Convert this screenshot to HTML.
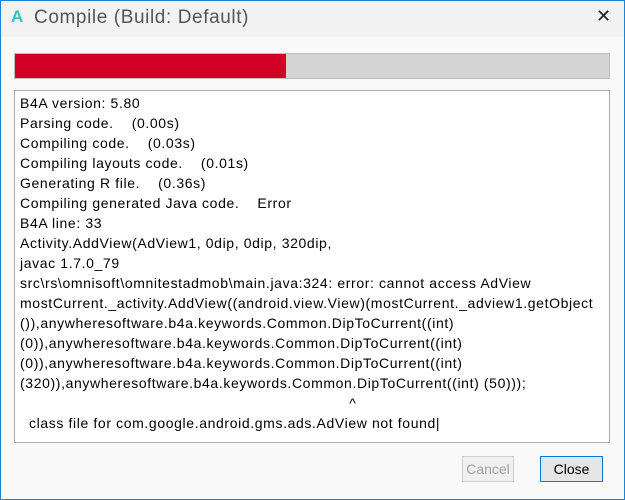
<!DOCTYPE html>
<html><head><style>
body{margin:0;width:625px;height:500px;overflow:hidden;background:#fff;font-family:"Liberation Sans",sans-serif}
.win{position:absolute;left:0;top:0;width:623px;height:498px;border:1px solid #1883d7;background:#f9f9f9}
.title{position:absolute;left:0;top:0;width:623px;height:36px;background:#f2f2f2}
.title .a{position:absolute;left:10px;top:6px;color:#2cc6c0;font-weight:bold;font-size:17px}
.title .t{position:absolute;left:33px;top:6px;color:#555;font-size:19px;letter-spacing:0.6px}
.title .x{position:absolute;left:595px;top:5px;font-size:18px;color:#222}
.pb{position:absolute;left:13px;top:52px;width:594px;height:24px;border:1px solid #bcbcbc;background:#d4d4d4}
.pb div{width:271px;height:24px;background:#d20027}
.box{position:absolute;left:13px;top:89px;width:594px;height:351px;border:1px solid #acacac;background:#fff}
.txt{position:absolute;left:5px;top:2px;font-size:14px;line-height:20px;color:#000;white-space:pre;letter-spacing:0.62px}
.btn{position:absolute;top:455px;height:24px;border:1px solid #adadad;background:#e5e5e5;font-size:14px;line-height:24px;text-align:center}
</style></head><body>
<div class="win">
<div class="title"><span class="a">A</span><span class="t">Compile (Build: Default)</span><span class="x">✕</span></div>
<div class="pb"><div></div></div>
<div class="box"><div class="txt">B4A version: 5.80
Parsing code.    (0.00s)
Compiling code.    (0.03s)
Compiling layouts code.    (0.01s)
Generating R file.    (0.36s)
Compiling generated Java code.    Error
B4A line: 33
Activity.AddView(AdView1, 0dip, 0dip, 320dip,
javac 1.7.0_79
src\rs\omnisoft\omnitestadmob\main.java:324: error: cannot access AdView
mostCurrent._activity.AddView((android.view.View)(mostCurrent._adview1.getObject
()),anywheresoftware.b4a.keywords.Common.DipToCurrent((int)
(0)),anywheresoftware.b4a.keywords.Common.DipToCurrent((int)
(0)),anywheresoftware.b4a.keywords.Common.DipToCurrent((int)
(320)),anywheresoftware.b4a.keywords.Common.DipToCurrent((int) (50)));
                                                                         ^
  class file for com.google.android.gms.ads.AdView not found|</div></div>
<div class="btn" style="left:461px;width:50px;color:#a0a0a0;background:#f0f0f0;border-color:#cfcfcf">Cancel</div>
<div class="btn" style="left:539px;width:61px;border-color:#0078d7">Close</div>
</div>
</body></html>
